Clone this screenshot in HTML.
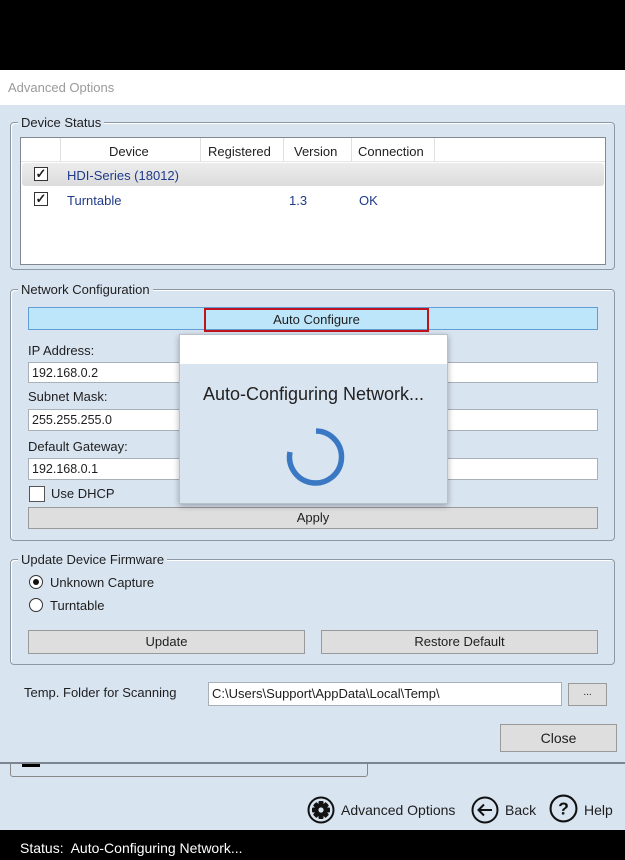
<!DOCTYPE html>
<html><head><style>
*{box-sizing:border-box;margin:0;padding:0}
body{width:625px;height:860px;position:relative;overflow:hidden;background:#d9e4f1;font-family:"Liberation Sans",sans-serif;font-size:13px;color:#1e1e1e}
.a{position:absolute}
.grp{position:absolute;border:1px solid #8e98a4;border-radius:4px;box-shadow:inset 1px 1px 0 #fff}
.leg{position:absolute;top:-8px;left:7px;background:#d9e4f1;padding:0 3px;font-size:13px;line-height:16px}
.inp{position:absolute;background:#fff;border:1px solid #a8b0ba;padding-left:3px;line-height:20px;font-size:12.5px}
.btn{position:absolute;background:#dedede;border:1px solid #9a9a9a;text-align:center;font-size:13px}
.lbl{position:absolute;font-size:13px}
.cb{position:absolute;width:14px;height:14px;border:1px solid #333;background:#fff}
</style></head><body>
<div class="a" style="left:0;top:0;width:625px;height:70px;background:#000"></div>
<div class="a" style="left:0;top:70px;width:625px;height:35px;background:#fff"></div>
<div class="a" style="left:8px;top:80px;color:#9a9a9a;font-size:13px">Advanced Options</div>

<div class="a" style="left:10px;top:745px;width:358px;height:32px;border:1px solid #888;border-radius:3px"></div>
<div class="a" style="left:22px;top:762px;width:18px;height:5px;background:#000"></div>
<div class="a" style="left:383px;top:763px;width:232px;height:1px;background:#888"></div>
<div class="a" style="left:0;top:762px;width:625px;height:2px;background:#7c8590"></div>
<div class="a" style="left:0;top:105px;width:625px;height:657px;background:#d9e4f1"></div>

<div class="grp" style="left:10px;top:122px;width:605px;height:148px"><div class="leg">Device Status</div></div>
<div class="a" style="left:20px;top:137px;width:586px;height:128px;background:#fff;border:1px solid #828790"></div>
<div class="a" style="left:21px;top:138px;width:584px;height:24px;background:#fff;border-bottom:1px solid #e5e5e5"></div>
<div class="a" style="left:60px;top:138px;width:1px;height:24px;background:#e0e0e0"></div>
<div class="a" style="left:200px;top:138px;width:1px;height:24px;background:#e0e0e0"></div>
<div class="a" style="left:283px;top:138px;width:1px;height:24px;background:#e0e0e0"></div>
<div class="a" style="left:351px;top:138px;width:1px;height:24px;background:#e0e0e0"></div>
<div class="a" style="left:434px;top:138px;width:1px;height:24px;background:#e0e0e0"></div>
<div class="lbl" style="left:109px;top:144px">Device</div>
<div class="lbl" style="left:208px;top:144px">Registered</div>
<div class="lbl" style="left:294px;top:144px">Version</div>
<div class="lbl" style="left:358px;top:144px">Connection</div>
<div class="a" style="left:22px;top:163px;width:582px;height:23px;background:linear-gradient(#ececec,#dcdcdc);border-radius:3px"></div>
<div class="cb" style="left:34px;top:167px;font-size:13px;line-height:12px;text-align:center;font-weight:bold">✓</div>
<div class="lbl" style="left:67px;top:168px;color:#1f3a8a">HDI-Series (18012)</div>
<div class="cb" style="left:34px;top:192px;font-size:13px;line-height:12px;text-align:center;font-weight:bold">✓</div>
<div class="lbl" style="left:67px;top:193px;color:#1f3a8a">Turntable</div>
<div class="lbl" style="left:289px;top:193px;color:#1f3a8a">1.3</div>
<div class="lbl" style="left:359px;top:193px;color:#1f3a8a">OK</div>

<div class="grp" style="left:10px;top:289px;width:605px;height:252px"><div class="leg">Network Configuration</div></div>
<div class="a" style="left:28px;top:307px;width:570px;height:23px;background:#bee6fa;border:1px solid #5f9fd4"></div>
<div class="a" style="left:204px;top:308px;width:225px;height:24px;border:2px solid #c0141c;text-align:center;line-height:20px">Auto Configure</div>
<div class="lbl" style="left:28px;top:343px">IP Address:</div>
<div class="inp" style="left:28px;top:362px;width:570px;height:21px">192.168.0.2</div>
<div class="lbl" style="left:28px;top:389px">Subnet Mask:</div>
<div class="inp" style="left:28px;top:409px;width:570px;height:22px">255.255.255.0</div>
<div class="lbl" style="left:28px;top:439px">Default Gateway:</div>
<div class="inp" style="left:28px;top:458px;width:570px;height:22px">192.168.0.1</div>
<div class="cb" style="left:29px;top:486px;width:16px;height:16px;border-color:#555"></div>
<div class="lbl" style="left:51px;top:486px">Use DHCP</div>
<div class="btn" style="left:28px;top:507px;width:570px;height:22px;line-height:20px">Apply</div>

<div class="a" style="left:179px;top:334px;width:269px;height:170px;background:#d9e4f1;border:1px solid #b8c0c8;box-shadow:0 2px 6px rgba(0,0,0,.3)">
<div style="height:29px;background:#fff"></div>
<div style="text-align:center;font-size:18px;margin-top:20px;color:#222">Auto-Configuring Network...</div>
</div>
<svg class="a" style="left:280px;top:424px" width="66" height="66" viewBox="0 0 66 66"><path d="M36 7 A26 26 0 1 1 10 28" fill="none" stroke="#3b78c3" stroke-width="5.5"/></svg>

<div class="grp" style="left:10px;top:559px;width:605px;height:106px"><div class="leg">Update Device Firmware</div></div>
<div class="a" style="left:29px;top:575px;width:14px;height:14px;border:1px solid #333;border-radius:50%;background:#fff"><div style="margin:3px;width:6px;height:6px;border-radius:50%;background:#111"></div></div>
<div class="lbl" style="left:50px;top:575px">Unknown Capture</div>
<div class="a" style="left:29px;top:598px;width:14px;height:14px;border:1px solid #333;border-radius:50%;background:#fff"></div>
<div class="lbl" style="left:50px;top:598px">Turntable</div>
<div class="btn" style="left:28px;top:630px;width:277px;height:24px;line-height:22px">Update</div>
<div class="btn" style="left:321px;top:630px;width:277px;height:24px;line-height:22px">Restore Default</div>

<div class="lbl" style="left:24px;top:685px">Temp. Folder for Scanning</div>
<div class="inp" style="left:208px;top:682px;width:354px;height:24px;line-height:22px;font-size:13px">C:\Users\Support\AppData\Local\Temp\</div>
<div class="btn" style="left:568px;top:683px;width:39px;height:23px;line-height:18px;font-size:10px">...</div>
<div class="btn" style="left:500px;top:724px;width:117px;height:28px;line-height:26px;font-size:14px">Close</div>

<svg class="a" style="left:307px;top:796px" width="28" height="28" viewBox="0 0 28 28"><circle cx="14" cy="14" r="12.5" fill="none" stroke="#111" stroke-width="2"/><g fill="#111"><rect x="11.5" y="5" width="5" height="18" rx="1"/><rect x="11.5" y="5" width="5" height="18" rx="1" transform="rotate(45 14 14)"/><rect x="11.5" y="5" width="5" height="18" rx="1" transform="rotate(90 14 14)"/><rect x="11.5" y="5" width="5" height="18" rx="1" transform="rotate(135 14 14)"/><circle cx="14" cy="14" r="6.5"/></g><circle cx="14" cy="14" r="2.6" fill="#d9e4f1"/></svg>
<div class="lbl" style="left:341px;top:802px;font-size:14px">Advanced Options</div>
<svg class="a" style="left:471px;top:796px" width="28" height="28" viewBox="0 0 28 28"><circle cx="14" cy="14" r="12.5" fill="none" stroke="#111" stroke-width="2"/><path d="M21 14H8M13 8.5L7.5 14L13 19.5" fill="none" stroke="#111" stroke-width="2"/></svg>
<div class="lbl" style="left:505px;top:802px;font-size:14px">Back</div>
<svg class="a" style="left:549px;top:794px" width="29" height="29" viewBox="0 0 28 28"><circle cx="14" cy="14" r="12.5" fill="none" stroke="#111" stroke-width="2"/><text x="14" y="20" text-anchor="middle" font-family="Liberation Sans" font-weight="bold" font-size="17" fill="#111">?</text></svg>
<div class="lbl" style="left:584px;top:802px;font-size:14px">Help</div>

<div class="a" style="left:0;top:830px;width:625px;height:30px;background:#000;color:#fff;font-size:14px;padding:10px 0 0 20px">Status:&nbsp; Auto-Configuring Network...</div>
</body></html>
